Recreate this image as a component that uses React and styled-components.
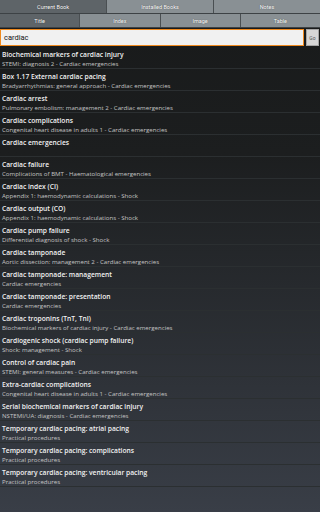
import React from "react";
import styled, { createGlobalStyle } from "styled-components";

const GlobalStyle = createGlobalStyle`
  html, body {
    margin: 0;
    padding: 0;
  }
  body {
    font-family: "Open Sans", Roboto, "Liberation Sans", sans-serif;
    background: #181a1a;
  }
`;

const Screen = styled.div`
  width: 320px;
  height: 512px;
  display: flex;
  flex-direction: column;
  background: linear-gradient(#181a1a 0%, #1c1e1f 30%, #393e47 100%);
  overflow: hidden;
`;

const TabRow = styled.div`
  display: flex;
  height: 13px;
  border-bottom: 1px solid #3d4245;
`;

const Tab = styled.div`
  flex: 1;
  display: flex;
  align-items: center;
  justify-content: center;
  background: ${(props) => (props.$active ? "#5e6468" : "#899094")};
  border-right: 1px solid #4a4f52;
  color: #ffffff;
  font-family: Roboto, sans-serif;
  font-size: 5.5px;
  text-shadow: 0 0 1px rgba(0, 0, 0, 0.6);

  &:last-child {
    border-right: none;
  }
`;

const SearchBar = styled.div`
  display: flex;
  gap: 2px;
  padding: 1px 1px 1px 0;
  height: 17px;
`;

const SearchInput = styled.div`
  flex: 1;
  display: flex;
  align-items: center;
  padding: 0 3px;
  background: #f1f1f1;
  border: 1px solid #f08a1e;
  color: #111;
  font-family: Roboto, sans-serif;
  font-size: 7.5px;
`;

const GoButton = styled.div`
  width: 11px;
  display: flex;
  align-items: center;
  justify-content: center;
  background: #d6d6d6;
  border: 1px solid #a5a5a5;
  color: #555;
  font-family: Roboto, sans-serif;
  font-size: 5px;
`;

const List = styled.div`
  display: flex;
  flex-direction: column;
`;

const Row = styled.div`
  height: 22px;
  padding: 3.5px 0 0 2px;
  box-sizing: border-box;
  border-bottom: 1px solid #2b2f31;
`;

const Title = styled.div`
  color: #f2f2f2;
  font-size: 6.7px;
  font-weight: 600;
  line-height: 8px;
  white-space: nowrap;
`;

const Subtitle = styled.div`
  margin-top: 1px;
  color: #c4c4c4;
  font-size: 6.1px;
  line-height: 7px;
  white-space: nowrap;
`;

const topTabs = ["Current Book", "Installed Books", "Notes"];
const subTabs = ["Title", "Index", "Image", "Table"];

const results = [
  ["Biochemical markers of cardiac injury", "STEMI: diagnosis 2 - Cardiac emergencies"],
  ["Box 1.17 External cardiac pacing", "Bradyarrhythmias: general approach - Cardiac emergencies"],
  ["Cardiac arrest", "Pulmonary embolism: management 2 - Cardiac emergencies"],
  ["Cardiac complications", "Congenital heart disease in adults 1 - Cardiac emergencies"],
  ["Cardiac emergencies", ""],
  ["Cardiac failure", "Complications of BMT - Haematological emergencies"],
  ["Cardiac index (CI)", "Appendix 1: haemodynamic calculations - Shock"],
  ["Cardiac output (CO)", "Appendix 1: haemodynamic calculations - Shock"],
  ["Cardiac pump failure", "Differential diagnosis of shock - Shock"],
  ["Cardiac tamponade", "Aortic dissection: management 2 - Cardiac emergencies"],
  ["Cardiac tamponade: management", "Cardiac emergencies"],
  ["Cardiac tamponade: presentation", "Cardiac emergencies"],
  ["Cardiac troponins (TnT, TnI)", "Biochemical markers of cardiac injury - Cardiac emergencies"],
  ["Cardiogenic shock (cardiac pump failure)", "Shock: management - Shock"],
  ["Control of cardiac pain", "STEMI: general measures - Cardiac emergencies"],
  ["Extra-cardiac complications", "Congenital heart disease in adults 1 - Cardiac emergencies"],
  ["Serial biochemical markers of cardiac injury", "NSTEMI/UA: diagnosis - Cardiac emergencies"],
  ["Temporary cardiac pacing: atrial pacing", "Practical procedures"],
  ["Temporary cardiac pacing: complications", "Practical procedures"],
  ["Temporary cardiac pacing: ventricular pacing", "Practical procedures"],
];

export default function App() {
  return (
    <Screen>
      <GlobalStyle />
      <TabRow>
        {topTabs.map((t, i) => (
          <Tab key={t} $active={i === 0}>
            {t}
          </Tab>
        ))}
      </TabRow>
      <TabRow>
        {subTabs.map((t, i) => (
          <Tab key={t} $active={i === 0}>
            {t}
          </Tab>
        ))}
      </TabRow>
      <SearchBar>
        <SearchInput>cardiac</SearchInput>
        <GoButton>Go</GoButton>
      </SearchBar>
      <List>
        {results.map(([title, sub]) => (
          <Row key={title}>
            <Title>{title}</Title>
            {sub && <Subtitle>{sub}</Subtitle>}
          </Row>
        ))}
      </List>
    </Screen>
  );
}
